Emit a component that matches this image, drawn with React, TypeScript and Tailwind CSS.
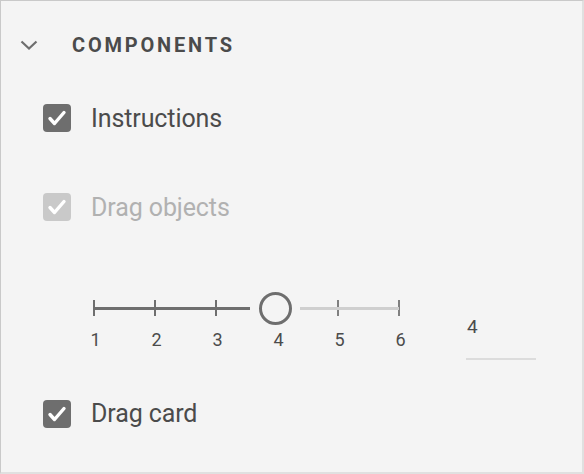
import { useState } from 'react'

const font = { fontFamily: 'Roboto, "Open Sans", sans-serif' }

const Check = () => (
  <svg viewBox="0 0 28 28" className="h-full w-full">
    <polyline
      points="7,14.5 11.5,19.5 21,8.5"
      fill="none"
      stroke="white"
      strokeWidth="3.4"
      strokeLinecap="round"
      strokeLinejoin="round"
    />
  </svg>
)

const CheckRow = ({ label, disabled }: { label: string; disabled?: boolean }) => (
  <div className="flex h-[28px] flex-row items-center gap-[20px]">
    <div
      className={
        'h-[28px] w-[28px] rounded-[4px] ' + (disabled ? 'bg-[#c9c9c9]' : 'bg-[#6e6e6e]')
      }
    >
      <Check />
    </div>
    <span
      className={
        'text-[25px] leading-none tracking-[-0.1px] ' + (disabled ? 'text-[#b1b1b1]' : 'text-[#4b4b4b]')
      }
    >
      {label}
    </span>
  </div>
)

const Slider = ({ value }: { value: number }) => {
  const ticks = [1, 2, 3, 4, 5, 6]

  return (
    <div className="relative w-[307px]">
      {/* track */}
      <div className="absolute left-0 top-[6.5px] h-[3.5px] w-[157px] bg-[#6e6e6e]" />
      <div className="absolute left-[207px] top-[7px] h-[3px] w-[99px] bg-[#cfcfcf]" />

      <div className="mt-[1px] flex flex-row justify-between">
        {ticks.map(t => (
          <div key={t} className="flex w-[2px] flex-col items-center">
            <div
              className={
                'h-[16px] w-[1.5px] ' + (t === value ? 'opacity-0' : t < value ? 'bg-[#6e6e6e]' : 'bg-[#808080]')
              }
            />
            <span className="ml-[3px] mt-[15px] whitespace-nowrap text-[18px] leading-none text-[#4b4b4b]">
              {t}
            </span>
          </div>
        ))}
      </div>

      {/* thumb */}
      <div className="absolute left-[166px] top-[-8.5px] h-[33px] w-[33px] rounded-full border-[3px] border-[#6e6e6e] bg-[#f4f4f4]" />
    </div>
  )
}

export default function App() {
  const [value] = useState(4)

  return (
    <div
      style={font}
      className="flex h-[474px] w-[584px] flex-col border-l border-t border-b-2 border-r-2 border-l-[#c9c9c9] border-t-[#c9c9c9] border-b-[#e0e0e0] border-r-[#e0e0e0] bg-[#f4f4f4]"
    >
      <div className="mt-[29px] flex h-[30px] flex-row items-center">
        <svg viewBox="0 0 18 10" className="ml-[19px] h-[10px] w-[18px]">
          <polyline points="1.5,1.5 9,8.5 16.5,1.5" fill="none" stroke="#6e6e6e" strokeWidth="2.2" />
        </svg>
        <span className="ml-[34px] text-[20px] font-bold leading-none tracking-[2.8px] text-[#4b4b4b]">
          COMPONENTS
        </span>
      </div>

      <div className="ml-[42px] flex flex-col">
        <div className="mt-[44px]">
          <CheckRow label="Instructions" />
        </div>

        <div className="mt-[61px]">
          <CheckRow label="Drag objects" disabled />
        </div>

        <div className="mt-[78px] flex flex-row items-start">
          <div className="ml-[50px]">
            <Slider value={value} />
          </div>

          <div className="ml-[66px] mt-[18px] flex w-[70px] flex-col">
            <span className="pl-[1px] text-[19px] leading-none text-[#4b4b4b]">{value}</span>
            <div className="mt-[22px] h-[1.5px] w-full bg-[#dcdcdc]" />
          </div>
        </div>

        <div className="mt-[40px]">
          <CheckRow label="Drag card" />
        </div>
      </div>
    </div>
  )
}
